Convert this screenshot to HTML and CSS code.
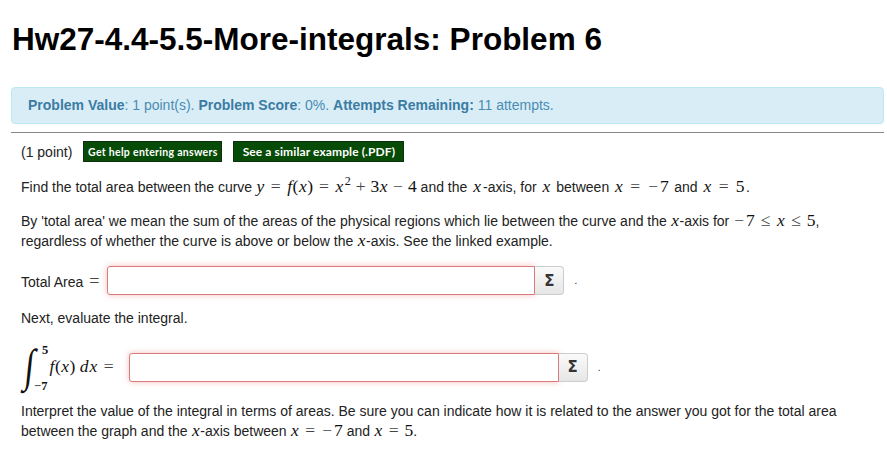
FILE: index.html
```html
<!DOCTYPE html>
<html>
<head>
<meta charset="utf-8">
<link rel="stylesheet" href="styles.css">
</head>
<body>
<div class="page">
  <h1 class="title">Hw27-4.4-5.5-More-integrals: Problem 6</h1>
  <div class="alert"><b>Problem Value</b>: 1 point(s). <b>Problem Score</b>: 0%. <b>Attempts Remaining:</b> 11 attempts.</div>
  <hr class="rule">
  <div class="problem">
    <div class="head">
      <span class="pts">(1 point)</span>
      <span class="btn btn-small">Get help entering answers</span>
      <span class="btn btn-big">See a similar example (.PDF)</span>
    </div>
    <p class="para p1">Find the total area between the curve <span class="m"><i>y</i><span class="rel">=</span><i>f</i>(<i>x</i>)<span class="rel">=</span><i>x</i><sup>2</sup><span class="bin">+</span>3<i>x</i><span class="bin">−</span>4</span> and the <span class="m sm"><i>x</i></span>-axis, for <span class="m sm"><i>x</i></span> between <span class="m sm"><i>x</i><span class="rel">=</span><span class="un">−</span>7</span> and <span class="m sm"><i>x</i><span class="rel">=</span>5</span>.</p>
    <p class="para p2">By 'total area' we mean the sum of the areas of the physical regions which lie between the curve and the <span class="m"><i>x</i></span>-axis for <span class="m"><span class="un">−</span>7<span class="rel">≤</span><i>x</i><span class="rel">≤</span>5</span>,<br>regardless of whether the curve is above or below the <span class="m"><i>x</i></span>-axis. See the linked example.</p>
    <div class="answer a1">
      <span class="label">Total Area<span class="m rel">=</span></span>
      <span class="field"><span class="inp inp1"></span><span class="sig">Σ</span></span>
      <span class="dot">.</span>
    </div>
    <p class="para p3">Next, evaluate the integral.</p>
    <div class="answer a2">
      <span class="integral m">
        <span class="int">∫</span>
        <span class="limits"><span class="up">5</span><span class="lo"><span class="un">−</span>7</span></span>
        <span class="integrand"><i>f</i>(<i>x</i>)<span class="thin"></span><i>d</i><i>x</i><span class="rel">=</span></span>
      </span>
      <span class="field"><span class="inp inp2"></span><span class="sig">Σ</span></span>
      <span class="dot">.</span>
    </div>
    <p class="para p4">Interpret the value of the integral in terms of areas. Be sure you can indicate how it is related to the answer you got for the total area<br>between the graph and the <span class="m"><i>x</i></span>-axis between <span class="m"><i>x</i><span class="rel">=</span><span class="un">−</span>7</span> and <span class="m"><i>x</i><span class="rel">=</span>5</span>.</p>
  </div>
</div>
</body>
</html>
```
FILE: styles.css
```css
html, body {
  margin: 0;
  padding: 0;
  background: #fff;
}
body {
  font-family: "Liberation Sans", Arial, sans-serif;
  color: #222;
  font-size: 14px;
}
.page {
  padding: 0 3px 0 11px;
}
.title {
  margin: 0;
  padding: 19px 0 0 1px;
  font-size: 31.5px;
  line-height: 40px;
  font-weight: bold;
  color: #000;
}
.alert {
  margin-top: 28px;
  height: 35px;
  border: 1px solid #bce8f1;
  border-radius: 4px;
  background: #d9edf7;
  color: #4a8cb3;
  font-size: 14px;
  line-height: 35px;
  padding-left: 16px;
}
.alert b {
  color: #3b7ca3;
}
.rule {
  margin: 8px 0 0;
  border: 0;
  border-top: 1px solid #888;
  height: 0;
}
.problem {
  padding-left: 10px;
}
.head {
  display: flex;
  align-items: center;
  height: 21px;
  margin-top: 8px;
}
.pts {
  margin-right: 11px;
}
.btn {
  display: inline-flex;
  align-items: center;
  justify-content: center;
  height: 21px;
  box-sizing: border-box;
  background: #064b06;
  border: 1px solid #0f2f0f;
  color: #fff;
  font-family: "Lato", sans-serif;
  font-weight: bold;
}
.btn-small {
  width: 139px;
  font-size: 10.5px;
  letter-spacing: 0.3px;
  margin-right: 11px;
}
.btn-big {
  width: 171px;
  font-size: 12px;
  letter-spacing: 0.1px;
}
.para {
  margin: 0;
  line-height: 20px;
}
.p1 { margin-top: 15px; }
.p2 { margin-top: 14px; }
.p3 { margin-top: 13px; }
.p4 { margin-top: 10px; }
.m {
  font-family: "Liberation Serif", "DejaVu Serif", serif;
  font-size: 17.5px;
  line-height: 1;
  color: #111;
}
.sm {
  margin: 0 1.5px;
}
.sm .rel {
  margin: 0 7px;
}
.m i {
  font-style: italic;
  padding: 0 0.5px;
}
.m sup {
  font-size: 12px;
  line-height: 0;
  vertical-align: 7px;
  margin-left: 1px;
}
.rel {
  display: inline-block;
  margin: 0 6px;
  color: #444;
}
.bin {
  display: inline-block;
  margin: 0 5px;
  color: #444;
}
.un {
  display: inline-block;
  margin: 0 2px 0 1px;
  color: #444;
}
.answer {
  display: flex;
  align-items: center;
}
.a1 {
  margin-top: 15px;
  height: 29px;
}
.a2 {
  margin-top: 15px;
  height: 48px;
}
.label .rel {
  margin: 0 8px 0 6px;
  font-size: 18px;
}
.field {
  display: flex;
  height: 29px;
}
.inp {
  display: block;
  box-sizing: border-box;
  height: 29px;
  border: 1px solid #dc7a7a;
  border-radius: 3px 0 0 3px;
  box-shadow: 0 0 6px rgba(220, 80, 80, 0.35);
  background: #fff;
}
.inp1 { width: 428px; }
.inp2 { width: 430px; }
.sig {
  display: flex;
  align-items: center;
  justify-content: center;
  box-sizing: border-box;
  width: 29px;
  height: 29px;
  border: 1px solid #ccc;
  border-left: 0;
  border-radius: 0 4px 4px 0;
  background: linear-gradient(#fafafa, #e6e6e6);
  font-family: "DejaVu Sans", sans-serif;
  font-weight: bold;
  font-size: 15px;
  color: #333;
}
.dot {
  margin-left: 10px;
  font-size: 10px;
}
.integral {
  display: flex;
  align-items: stretch;
  height: 48px;
  margin-left: -1px;
}
.int {
  display: block;
  font-size: 34px;
  font-weight: bold;
  line-height: 46px;
  width: 10px;
  margin-left: 5px;
  transform: scaleY(1.35) skewX(-8deg);
  transform-origin: center;
  color: #111;
}
.limits {
  display: flex;
  flex-direction: column;
  justify-content: space-between;
  width: 18px;
  font-size: 12.5px;
  font-weight: bold;
  line-height: 14px;
}
.limits .up {
  margin-left: 7px;
}
.limits .lo {
  margin-left: -1px;
  margin-bottom: -2px;
}
.limits .lo .un {
  margin: 0;
}
.integrand {
  align-self: center;
  margin-left: -4px;
}
.integrand .rel {
  margin: 0 15px 0 6px;
}
.thin {
  display: inline-block;
  width: 4px;
}
```
